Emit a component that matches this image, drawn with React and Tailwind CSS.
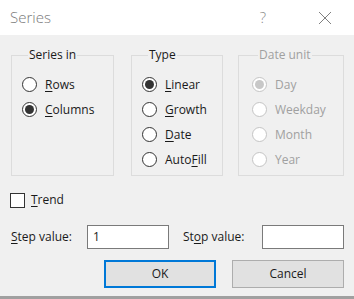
function Radio({ checked, disabled }) {
  return (
    <span
      className={`relative inline-flex h-[15px] w-[15px] shrink-0 items-center justify-center rounded-full border bg-white ${
        disabled ? "border-[#c4c4c4]" : "border-[#333]"
      }`}
    >
      {checked && !disabled && <span className="h-[9px] w-[9px] rounded-full bg-[#333]" />}
      {checked && disabled && <span className="h-[9px] w-[9px] rounded-full bg-[#c8c8c8]" />}
    </span>
  );
}

function Option({ label, u, checked, disabled }) {
  const i = label.indexOf(u);
  return (
    <div className="flex h-[25px] items-center gap-[8px]">
      <Radio checked={checked} disabled={disabled} />
      <span className={disabled ? "text-[#a0a0a0]" : "text-[#1a1a1a]"}>
        {u ? (
          <>
            {label.slice(0, i)}
            <u className="underline-offset-2">{u}</u>
            {label.slice(i + 1)}
          </>
        ) : (
          label
        )}
      </span>
    </div>
  );
}

function Group({ title, width, pad, disabled, children }) {
  return (
    <fieldset className={`h-[129px] shrink-0 border border-[#dcdcdc] ${width} ${pad}`}>
      <legend className={`ml-[6px] px-[1px] leading-[16px] ${disabled ? "text-[#a0a0a0]" : "text-[#1a1a1a]"}`}>
        {title}
      </legend>
      <div className="pt-[9px]">{children}</div>
    </fieldset>
  );
}

export default function App() {
  return (
    <div
      className="flex h-[299px] w-[354px] flex-col bg-[#f0f0f0] text-[12px] text-[#1a1a1a]"
      style={{ fontFamily: '"Open Sans", "Noto Sans", sans-serif' }}
    >
      <div className="flex h-[35px] shrink-0 items-center bg-white pl-[10px]">
        <span className="text-[15px] font-light text-[#7a7a7a]">Series</span>
        <span className="ml-auto mr-[51px] text-[15px] font-light text-[#8a8a8a]">?</span>
        <svg width="16" height="16" viewBox="0 0 16 16" className="mr-[21px]">
          <path d="M2 2 L14 14 M14 2 L2 14" stroke="#808080" strokeWidth="1" fill="none" />
        </svg>
      </div>

      <div className="flex flex-1 flex-col px-[10px]">
        <div className="mt-[12px] flex pl-[1px]">
          <Group title="Series in" width="w-[103px]" pad="pl-[10px]">
            <Option label="Rows" u="R" />
            <Option label="Columns" u="C" checked />
          </Group>
          <Group title="Type" width="ml-[17px] w-[92px]" pad="pl-[10px]">
            <Option label="Linear" u="L" checked />
            <Option label="Growth" u="G" />
            <Option label="Date" u="D" />
            <Option label="AutoFill" u="F" />
          </Group>
          <Group title="Date unit" width="ml-[15px] w-[106px]" pad="pl-[13px]" disabled>
            <Option label="Day" checked disabled />
            <Option label="Weekday" disabled />
            <Option label="Month" disabled />
            <Option label="Year" disabled />
          </Group>
        </div>

        <div className="mt-[15px] flex items-center gap-[6px]">
          <span className="h-[15px] w-[15px] border border-[#333] bg-white" />
          <span>
            <u className="underline-offset-2">T</u>rend
          </span>
        </div>

        <div className="mt-[16px] flex h-[24px] items-center">
          <span className="w-[77px] pl-[1px]">
            <u className="underline-offset-2">S</u>tep value:
          </span>
          <div className="flex h-[24px] w-[82px] items-center border border-[#7a7a7a] bg-white pl-[5px]">1</div>
          <span className="ml-[14px] w-[79px]">
            St<u className="underline-offset-2">o</u>p value:
          </span>
          <div className="h-[24px] w-[82px] border border-[#7a7a7a] bg-white" />
        </div>

        <div className="mt-[11px] flex">
          <button className="ml-[94px] h-[28px] w-[112px] border-2 border-[#0078d7] bg-[#e1e1e1] text-[12px]">
            OK
          </button>
          <button className="ml-[16px] h-[28px] w-[112px] border border-[#adadad] bg-[#e1e1e1] text-[12px]">
            Cancel
          </button>
        </div>
      </div>
      <div className="h-[3px] shrink-0 bg-[#a0a0a0]" />
    </div>
  );
}
